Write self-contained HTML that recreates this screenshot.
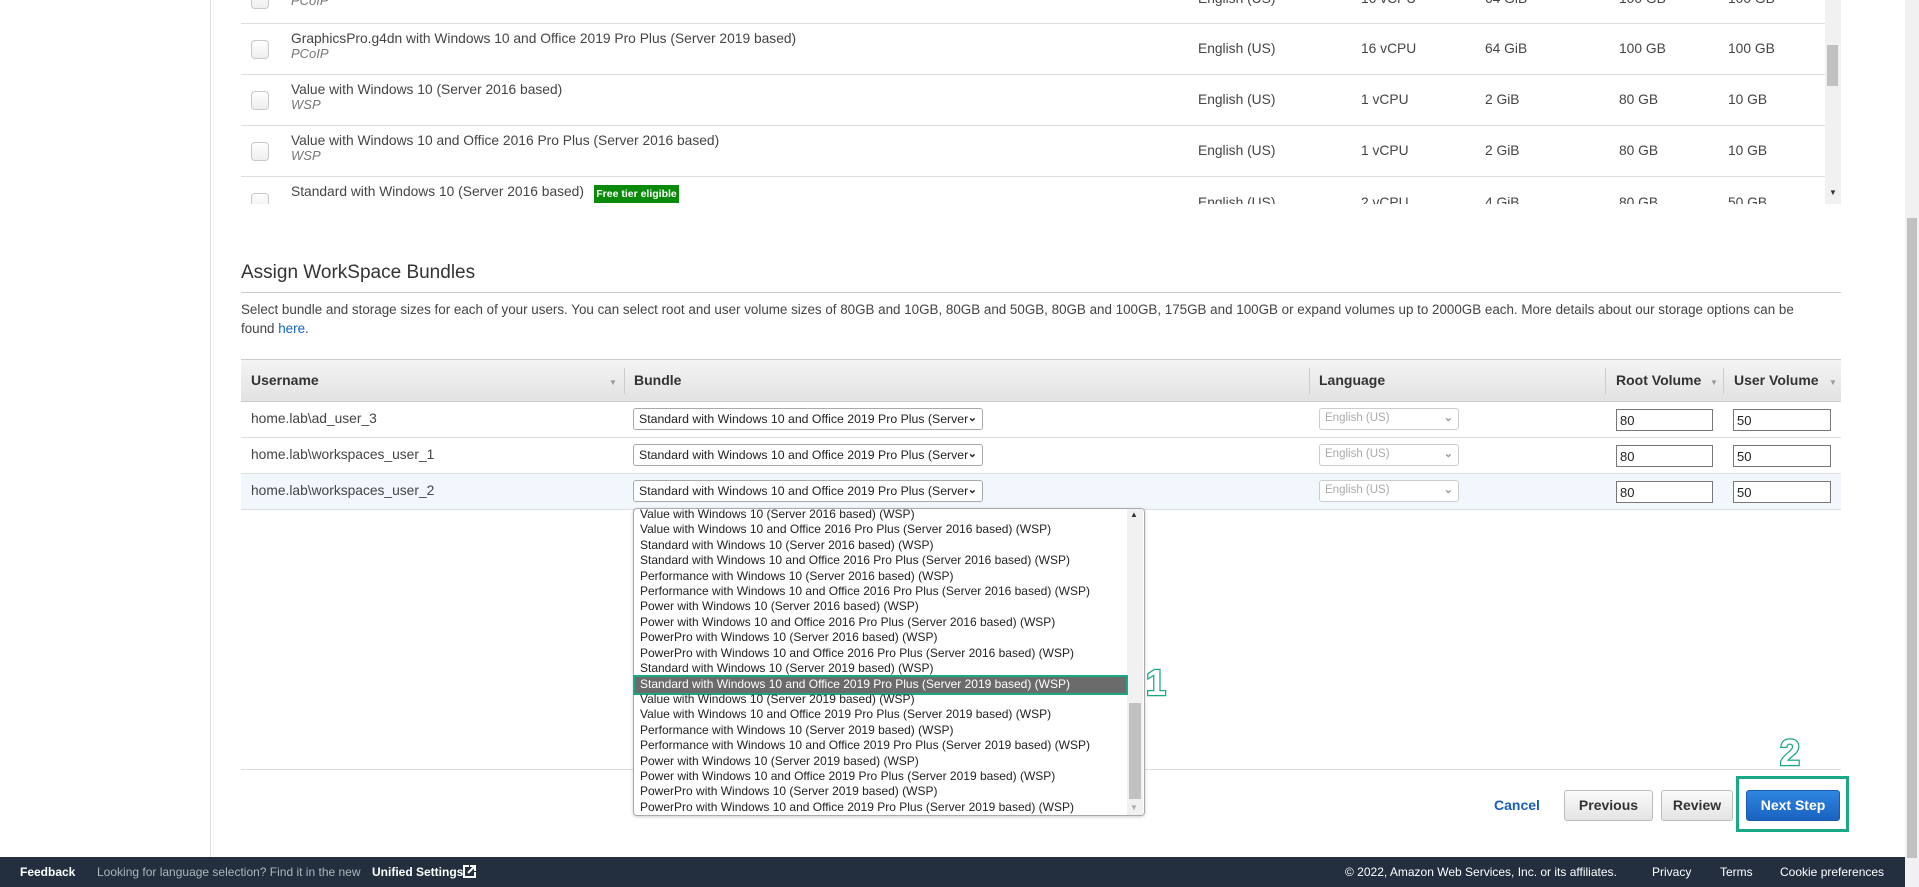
<!DOCTYPE html>
<html><head><meta charset="utf-8">
<style>
*{box-sizing:border-box;margin:0;padding:0}
body{width:1919px;height:887px;overflow:hidden;background:#fff;font-family:"Liberation Sans",Arial,sans-serif;color:#333;position:relative}
.abs{position:absolute}
.t{position:absolute;white-space:nowrap;font-size:13.8px;color:#444}
.sub{position:absolute;white-space:nowrap;font-size:13px;color:#777;font-style:italic}
.cb{position:absolute;width:18px;height:19px;border:1px solid #c8c8c8;border-radius:4px;background:linear-gradient(#fff,#eee)}
.hl{position:absolute;left:241px;width:1584px;height:1px;background:#ddd}
.sel{position:absolute;height:22px;border:1px solid #aaa;border-radius:3px;background:#fff;font-size:12.3px;color:#222;padding:3px 0 0 5px;white-space:nowrap;overflow:hidden}
.sel .ar{position:absolute;right:5px;top:2px;font-size:11px;font-weight:bold}
.inp{position:absolute;height:22px;border:1px solid #777;background:#fff;font-size:13px;color:#222;padding:3px 0 0 3px}
.th{position:absolute;font-size:14px;font-weight:bold;color:#333;top:372px}
.dv{position:absolute;top:368px;width:1px;height:26px;background:#ccc}
.sa{position:absolute;top:378px;font-size:8px;color:#999}
.it{position:absolute;left:640px;font-size:12px;color:#222;white-space:nowrap;height:15.4px;line-height:15.4px}
.btn{position:absolute;top:790px;height:31px;border:1px solid #bbb;border-radius:3px;background:linear-gradient(#fafafa,#e4e4e4);font-size:14px;font-weight:bold;color:#333;text-align:center;line-height:29px}
.ft{position:absolute;top:865px;font-size:12px;color:#fff;white-space:nowrap}
.num{position:absolute;font-size:36px;font-weight:bold;color:#fff;-webkit-text-stroke:2.5px #1aa886;paint-order:stroke fill;font-family:"Liberation Sans",sans-serif}
</style></head><body>

<div class="abs" style="left:210px;top:0;width:1px;height:857px;background:#ddd"></div>

<div class="cb" style="left:251px;top:-10px"></div>
<div class="sub" style="left:291px;top:-7px">PCoIP</div>
<div class="t" style="left:1198px;top:-9px">English (US)</div>
<div class="t" style="left:1361px;top:-9px">16 vCPU</div>
<div class="t" style="left:1485px;top:-9px">64 GiB</div>
<div class="t" style="left:1619px;top:-9px">100 GB</div>
<div class="t" style="left:1728px;top:-9px">100 GB</div>

<div class="hl" style="top:23px"></div>
<div class="cb" style="left:251px;top:40px"></div>
<div class="t" style="left:291px;top:31px">GraphicsPro.g4dn with Windows 10 and Office 2019 Pro Plus (Server 2019 based)</div>
<div class="sub" style="left:291px;top:46px">PCoIP</div>
<div class="t" style="left:1198px;top:41px">English (US)</div>
<div class="t" style="left:1361px;top:41px">16 vCPU</div>
<div class="t" style="left:1485px;top:41px">64 GiB</div>
<div class="t" style="left:1619px;top:41px">100 GB</div>
<div class="t" style="left:1728px;top:41px">100 GB</div>

<div class="hl" style="top:74px"></div>
<div class="cb" style="left:251px;top:91px"></div>
<div class="t" style="left:291px;top:82px">Value with Windows 10 (Server 2016 based)</div>
<div class="sub" style="left:291px;top:97px">WSP</div>
<div class="t" style="left:1198px;top:92px">English (US)</div>
<div class="t" style="left:1361px;top:92px">1 vCPU</div>
<div class="t" style="left:1485px;top:92px">2 GiB</div>
<div class="t" style="left:1619px;top:92px">80 GB</div>
<div class="t" style="left:1728px;top:92px">10 GB</div>

<div class="hl" style="top:125px"></div>
<div class="cb" style="left:251px;top:142px"></div>
<div class="t" style="left:291px;top:133px">Value with Windows 10 and Office 2016 Pro Plus (Server 2016 based)</div>
<div class="sub" style="left:291px;top:148px">WSP</div>
<div class="t" style="left:1198px;top:143px">English (US)</div>
<div class="t" style="left:1361px;top:143px">1 vCPU</div>
<div class="t" style="left:1485px;top:143px">2 GiB</div>
<div class="t" style="left:1619px;top:143px">80 GB</div>
<div class="t" style="left:1728px;top:143px">10 GB</div>

<div class="hl" style="top:176px"></div>
<div class="abs" style="left:241px;top:177px;width:1584px;height:27px;overflow:hidden">
 <div class="cb" style="left:10px;top:16px"></div>
 <div class="t" style="left:50px;top:7px">Standard with Windows 10 (Server 2016 based)</div>
 <div class="abs" style="left:353px;top:8px;width:85px;height:18px;background:#0a8a0a;color:#fff;font-size:10.5px;font-weight:bold;text-align:center;line-height:18px">Free tier eligible</div>
 <div class="t" style="left:957px;top:18px">English (US)</div>
 <div class="t" style="left:1120px;top:18px">2 vCPU</div>
 <div class="t" style="left:1244px;top:18px">4 GiB</div>
 <div class="t" style="left:1378px;top:18px">80 GB</div>
 <div class="t" style="left:1487px;top:18px">50 GB</div>
</div>
<div class="abs" style="left:1825px;top:0;width:16px;height:204px;background:#f1f1f1"></div>
<div class="abs" style="left:1827px;top:45px;width:11px;height:41px;background:#c1c1c1"></div>
<div class="abs" style="left:1829px;top:188px;font-size:8px;color:#333">▼</div>

<div class="abs" style="left:241px;top:262px;font-size:19px;color:#333">Assign WorkSpace Bundles</div>
<div class="abs" style="left:241px;top:292px;width:1600px;height:1px;background:#ccc"></div>
<div class="abs" style="left:241px;top:302px;font-size:13.4px;color:#444;white-space:nowrap">Select bundle and storage sizes for each of your users. You can select root and user volume sizes of 80GB and 10GB, 80GB and 50GB, 80GB and 100GB, 175GB and 100GB or expand volumes up to 2000GB each. More details about our storage options can be</div>
<div class="abs" style="left:241px;top:321px;font-size:13.4px;color:#444">found <span style="color:#1166bb">here</span>.</div>

<div class="abs" style="left:241px;top:359px;width:1600px;height:43px;background:linear-gradient(#f4f4f4,#e2e2e2);border-top:1px solid #ccc;border-bottom:1px solid #ccc"></div>
<div class="th" style="left:251px">Username</div>
<div class="sa" style="left:609px">▼</div>
<div class="dv" style="left:624px"></div>
<div class="th" style="left:634px">Bundle</div>
<div class="dv" style="left:1309px"></div>
<div class="th" style="left:1319px">Language</div>
<div class="dv" style="left:1605px"></div>
<div class="th" style="left:1616px">Root Volume</div>
<div class="sa" style="left:1710px">▼</div>
<div class="dv" style="left:1723px"></div>
<div class="th" style="left:1734px">User Volume</div>
<div class="sa" style="left:1829px">▼</div>

<div class="abs" style="left:241px;top:473px;width:1600px;height:36px;background:#f1f7fd"></div>
<div class="hl" style="top:437px;width:1600px"></div>
<div class="hl" style="top:473px;width:1600px"></div>
<div class="hl" style="top:509px;width:1600px"></div>

<div class="t" style="left:251px;top:411px">home.lab\ad_user_3</div>
<div class="t" style="left:251px;top:447px">home.lab\workspaces_user_1</div>
<div class="t" style="left:251px;top:483px">home.lab\workspaces_user_2</div>

<div class="sel" style="left:633px;top:408px;width:350px">Standard with Windows 10 and Office 2019 Pro Plus (Server<span class="ar">⌄</span></div>
<div class="sel" style="left:633px;top:444px;width:350px">Standard with Windows 10 and Office 2019 Pro Plus (Server<span class="ar">⌄</span></div>
<div class="sel" style="left:633px;top:480px;width:350px">Standard with Windows 10 and Office 2019 Pro Plus (Server<span class="ar">⌄</span></div>

<div class="sel" style="left:1319px;top:408px;width:140px;color:#aaa;border-color:#ccc;font-size:11.5px">English (US)<span class="ar" style="color:#999">⌄</span></div>
<div class="sel" style="left:1319px;top:444px;width:140px;color:#aaa;border-color:#ccc;font-size:11.5px">English (US)<span class="ar" style="color:#999">⌄</span></div>
<div class="sel" style="left:1319px;top:480px;width:140px;color:#aaa;border-color:#ccc;font-size:11.5px">English (US)<span class="ar" style="color:#999">⌄</span></div>

<div class="inp" style="left:1616px;top:409px;width:97px">80</div>
<div class="inp" style="left:1733px;top:409px;width:98px">50</div>
<div class="inp" style="left:1616px;top:445px;width:97px">80</div>
<div class="inp" style="left:1733px;top:445px;width:98px">50</div>
<div class="inp" style="left:1616px;top:481px;width:97px">80</div>
<div class="inp" style="left:1733px;top:481px;width:98px">50</div>

<div class="abs" style="left:241px;top:769px;width:1600px;height:1px;background:#ddd"></div>
<div class="abs" style="left:1494px;top:797px;font-size:14px;font-weight:bold;color:#1a5cb8">Cancel</div>
<div class="btn" style="left:1564px;width:89px">Previous</div>
<div class="btn" style="left:1661px;width:72px">Review</div>
<div class="btn" style="left:1746px;width:94px;background:linear-gradient(#2e86e0,#1a62c0);border-color:#1a5cb0;color:#fff">Next Step</div>
<div class="abs" style="left:1736px;top:776px;width:113px;height:56px;border:3px solid #1aa886"></div>
<div class="num" style="left:1780px;top:732px">2</div>

<div class="abs" style="left:633px;top:508px;width:512px;height:308px;background:#fff;border:1px solid #aaa;border-radius:4px;box-shadow:0 1px 3px rgba(0,0,0,.2)"></div>
<div class="abs" style="left:1127px;top:509px;width:16px;height:306px;background:#f1f1f1"></div>
<div class="abs" style="left:1129px;top:703px;width:12px;height:96px;background:#c1c1c1"></div>
<div class="abs" style="left:1130px;top:510px;font-size:8px;color:#333">▲</div>
<div class="abs" style="left:1130px;top:803px;font-size:8px;color:#aaa">▼</div>
<div class="it" style="top:507px">Value with Windows 10 (Server 2016 based) (WSP)</div>
<div class="it" style="top:522.4px">Value with Windows 10 and Office 2016 Pro Plus (Server 2016 based) (WSP)</div>
<div class="it" style="top:537.8px">Standard with Windows 10 (Server 2016 based) (WSP)</div>
<div class="it" style="top:553.2px">Standard with Windows 10 and Office 2016 Pro Plus (Server 2016 based) (WSP)</div>
<div class="it" style="top:568.6px">Performance with Windows 10 (Server 2016 based) (WSP)</div>
<div class="it" style="top:584px">Performance with Windows 10 and Office 2016 Pro Plus (Server 2016 based) (WSP)</div>
<div class="it" style="top:599.4px">Power with Windows 10 (Server 2016 based) (WSP)</div>
<div class="it" style="top:614.8px">Power with Windows 10 and Office 2016 Pro Plus (Server 2016 based) (WSP)</div>
<div class="it" style="top:630.2px">PowerPro with Windows 10 (Server 2016 based) (WSP)</div>
<div class="it" style="top:645.6px">PowerPro with Windows 10 and Office 2016 Pro Plus (Server 2016 based) (WSP)</div>
<div class="it" style="top:661px">Standard with Windows 10 (Server 2019 based) (WSP)</div>
<div class="abs" style="left:633px;top:675px;width:495px;height:20px;background:#6b6b6b;border:2.5px solid #1aa886"></div>
<div class="it" style="top:677px;color:#fff">Standard with Windows 10 and Office 2019 Pro Plus (Server 2019 based) (WSP)</div>
<div class="it" style="top:692px">Value with Windows 10 (Server 2019 based) (WSP)</div>
<div class="it" style="top:707.4px">Value with Windows 10 and Office 2019 Pro Plus (Server 2019 based) (WSP)</div>
<div class="it" style="top:722.8px">Performance with Windows 10 (Server 2019 based) (WSP)</div>
<div class="it" style="top:738.2px">Performance with Windows 10 and Office 2019 Pro Plus (Server 2019 based) (WSP)</div>
<div class="it" style="top:753.6px">Power with Windows 10 (Server 2019 based) (WSP)</div>
<div class="it" style="top:769px">Power with Windows 10 and Office 2019 Pro Plus (Server 2019 based) (WSP)</div>
<div class="it" style="top:784.4px">PowerPro with Windows 10 (Server 2019 based) (WSP)</div>
<div class="it" style="top:799.8px">PowerPro with Windows 10 and Office 2019 Pro Plus (Server 2019 based) (WSP)</div>
<div class="num" style="left:1146px;top:662px">1</div>

<div class="abs" style="left:1905px;top:0;width:14px;height:887px;background:#f1f1f1"></div>
<div class="abs" style="left:1907px;top:218px;width:10px;height:640px;background:#c1c1c1"></div>

<div class="abs" style="left:0;top:857px;width:1905px;height:30px;background:#232f3e"></div>
<div class="ft" style="left:20px;font-weight:bold">Feedback</div>
<div class="ft" style="left:97px;color:#aab7b8">Looking for language selection? Find it in the new</div>
<div class="ft" style="left:372px;font-weight:bold">Unified Settings</div>
<svg class="abs" style="left:463px;top:865px" width="13" height="13" viewBox="0 0 13 13"><path d="M6 1H1v11h11V7" fill="none" stroke="#fff" stroke-width="2"/><path d="M7 1h5v5M12 1L5 8" fill="none" stroke="#fff" stroke-width="2"/></svg>
<div class="ft" style="left:1345px">© 2022, Amazon Web Services, Inc. or its affiliates.</div>
<div class="ft" style="left:1652px">Privacy</div>
<div class="ft" style="left:1720px">Terms</div>
<div class="ft" style="left:1780px">Cookie preferences</div>
</body></html>
